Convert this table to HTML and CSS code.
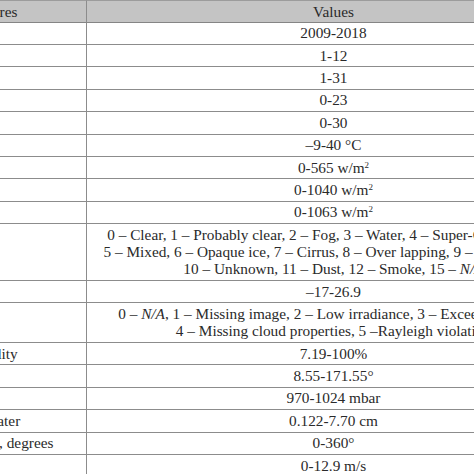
FILE: index.html
```html
<!DOCTYPE html>
<html>
<head>
<meta charset="utf-8">
<link rel="stylesheet" href="styles.css">
</head>
<body>
<div class="frame">
<table class="data">
  <thead>
    <tr><th class="feat">Features</th><th class="val">Values</th></tr>
  </thead>
  <tbody>
    <tr><td class="feat">Year</td><td class="val">2009-2018</td></tr>
    <tr><td class="feat">Month</td><td class="val">1-12</td></tr>
    <tr><td class="feat">Day</td><td class="val">1-31</td></tr>
    <tr><td class="feat">Hour</td><td class="val">0-23</td></tr>
    <tr><td class="feat">Minute</td><td class="val">0-30</td></tr>
    <tr><td class="feat">Temperature</td><td class="val">–9-40 °C</td></tr>
    <tr><td class="feat">DHI</td><td class="val">0-565 w/m<sup>2</sup></td></tr>
    <tr><td class="feat">DNI</td><td class="val">0-1040 w/m<sup>2</sup></td></tr>
    <tr><td class="feat">GHI</td><td class="val">0-1063 w/m<sup>2</sup></td></tr>
    <tr><td class="feat">Cloud type</td><td class="val">0 – Clear, 1 – Probably clear, 2 – Fog, 3 – Water, 4 – Super-Cooled Water,<br>5 – Mixed, 6 – Opaque ice, 7 – Cirrus, 8 – Over lapping, 9 – Overshooting,<br>10 – Unknown, 11 – Dust, 12 – Smoke, 15 – <i>N/A</i></td></tr>
    <tr><td class="feat">Dew point</td><td class="val">–17-26.9</td></tr>
    <tr><td class="feat">Fill flag</td><td class="val">0 – <i>N/A</i>, 1 – Missing image, 2 – Low irradiance, 3 – Exceeds clearsky,<br>4 – Missing cloud properties, 5 –Rayleigh violation</td></tr>
    <tr><td class="feat">Relative humidity</td><td class="val">7.19-100%</td></tr>
    <tr><td class="feat">Zenith angle</td><td class="val">8.55-171.55°</td></tr>
    <tr><td class="feat">Pressure</td><td class="val">970-1024 mbar</td></tr>
    <tr><td class="feat">Precipitable Water</td><td class="val">0.122-7.70 cm</td></tr>
    <tr><td class="feat">Wind direction, degrees</td><td class="val">0-360°</td></tr>
    <tr><td class="feat">Wind speed</td><td class="val">0-12.9 m/s</td></tr>
  </tbody>
</table>
</div>
</body>
</html>
```
FILE: styles.css
```css
html, body {
  margin: 0;
  padding: 0;
  background: #ffffff;
}
.frame {
  width: 474px;
  height: 474px;
  overflow: hidden;
}
.data {
  margin-left: -99px;
  border-collapse: separate;
  border-spacing: 0;
  table-layout: fixed;
  width: 679px;
  font-family: "Liberation Serif", "Times New Roman", serif;
  font-size: 15.3px;
  line-height: 17.2px;
  color: #2a2a2a;
}
.data th, .data td {
  box-sizing: border-box;
  white-space: nowrap;
  font-weight: normal;
}
.data th {
  background: #c4c4c4;
  border-top: 1px solid #9c9c9c;
  border-bottom: 1px solid #858585;
  padding: 2px 0 1.5px;
  text-align: center;
}
.data td {
  border-bottom: 1px solid #8c8c8c;
  padding: 1.6px 0 2.6px;
}
.feat {
  width: 185px;
}
td.feat {
  text-align: left;
  padding-left: 6.5px !important;
}
th.feat {
  padding-left: 0 !important;
  padding-right: 4px !important;
}
.val {
  width: 494px;
  text-align: center;
  border-left: 1px solid #8c8c8c;
}
.data sup {
  font-size: 9px;
  line-height: 0;
  vertical-align: 5px;
}
```
